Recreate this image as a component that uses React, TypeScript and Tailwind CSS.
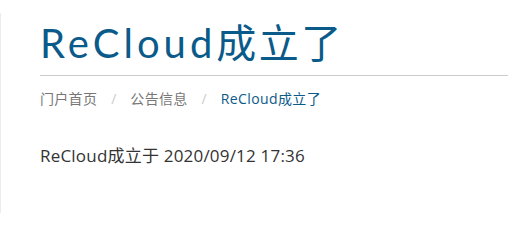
import React from 'react';

export default function App() {
  return (
    <div className="w-[508px] h-[227px] bg-white overflow-hidden">
      {/* 卡片 */}
      <div className="mt-[13px] h-[200px] border-l border-[#ececec] pl-[39px] pt-[6px]">
        <h1
          className="text-[40px] leading-[48px] text-[#0a5a8a]"
          style={{ fontFamily: 'Lato, "Noto Sans CJK SC", sans-serif' }}
        >
          <span className="tracking-[4px]">ReCloud</span>
          <span className="tracking-[2.5px]">成立了</span>
        </h1>
        <div className="mt-[8px] border-t border-[#cccccc]" />
        <nav
          className="mt-[13px] flex items-center text-[14px] leading-[20px] text-[#777]"
          style={{ fontFamily: '"Open Sans", "Noto Sans CJK SC", sans-serif' }}
        >
          <span className="tracking-[0.3px]">门户首页</span>
          <span className="px-[14px] text-[#ccc]">/</span>
          <span className="tracking-[0.3px]">公告信息</span>
          <span className="px-[14px] text-[#ccc]">/</span>
          <span className="text-[#0a5a8a] tracking-[0.4px]">ReCloud成立了</span>
        </nav>
        <p
          className="mt-[35px] text-[17px] leading-[23px] text-[#333] tracking-[0.2px]"
          style={{ fontFamily: '"Open Sans", "Noto Sans CJK SC", sans-serif' }}
        >
          ReCloud成立于 2020/09/12 17:36
        </p>
      </div>
    </div>
  );
}
